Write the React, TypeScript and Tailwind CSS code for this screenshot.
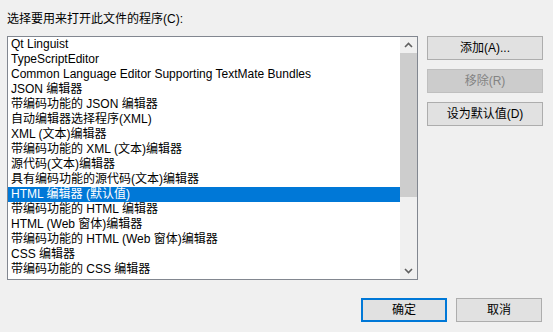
import React from "react";

const items = [
  "Qt Linguist",
  "TypeScriptEditor",
  "Common Language Editor Supporting TextMate Bundles",
  "JSON 编辑器",
  "带编码功能的 JSON 编辑器",
  "自动编辑器选择程序(XML)",
  "XML (文本)编辑器",
  "带编码功能的 XML (文本)编辑器",
  "源代码(文本)编辑器",
  "具有编码功能的源代码(文本)编辑器",
  "HTML 编辑器 (默认值)",
  "带编码功能的 HTML 编辑器",
  "HTML (Web 窗体)编辑器",
  "带编码功能的 HTML (Web 窗体)编辑器",
  "CSS 编辑器",
  "带编码功能的 CSS 编辑器",
];

const selected = 10;

function Chevron({ up }: { up?: boolean }) {
  return (
    <svg width="9" height="6" viewBox="0 0 9 6">
      <path
        d={up ? "M1 5 L4.5 1.5 L8 5" : "M1 1 L4.5 4.5 L8 1"}
        fill="none"
        stroke="#606060"
        strokeWidth="1.6"
      />
    </svg>
  );
}

function Button({ label, disabled, primary, className = "" }: { label: string; disabled?: boolean; primary?: boolean; className?: string }) {
  return (
    <div
      className={
        "flex h-[24px] items-center justify-center text-[12px] " +
        (disabled
          ? "border border-[#bfbfbf] bg-[#cccccc] text-[#838383] "
          : primary
          ? "border-2 border-[#0078d7] bg-[#e1e1e1] text-black "
          : "border border-[#adadad] bg-[#e1e1e1] text-black ") +
        className
      }
    >
      {label}
    </div>
  );
}

export default function App() {
  return (
    <div
      className="flex h-[332px] w-[553px] flex-col bg-[#f0f0f0] text-black"
      style={{ fontFamily: '"Liberation Sans", "Noto Sans CJK SC", sans-serif' }}
    >
      <div className="flex h-[36px] items-center pl-[7px] pt-[1px] text-[12px]">选择要用来打开此文件的程序(C):</div>

      <div className="flex pl-[7px]">
        {/* list */}
        <div className="flex h-[244px] w-[411px] border border-[#828790] bg-white">
          <div className="flex-1 overflow-hidden">
            {items.map((it, i) => (
              <div
                key={it}
                className={
                  "h-[15px] overflow-hidden whitespace-nowrap pl-[3px] text-[12px] leading-[15px] " +
                  (i === selected ? "bg-[#0078d7] text-white" : "text-black")
                }
              >
                {it}
              </div>
            ))}
          </div>
          <div className="flex w-[17px] flex-col bg-[#f0f0f0]">
            <div className="flex h-[16px] items-center justify-center">
              <Chevron up />
            </div>
            <div className="h-[144px] bg-[#cdcdcd]" />
            <div className="flex-1" />
            <div className="flex h-[16px] items-center justify-center">
              <Chevron />
            </div>
          </div>
        </div>

        {/* side buttons */}
        <div className="ml-[9px] flex w-[116px] flex-col gap-[9px]">
          <Button label="添加(A)..." />
          <Button label="移除(R)" disabled />
          <Button label="设为默认值(D)" />
        </div>
      </div>

      <div className="mt-[18px] flex justify-end gap-[9px] pr-[11px]">
        <Button label="确定" primary className="w-[86px]" />
        <Button label="取消" className="w-[86px]" />
      </div>
    </div>
  );
}
